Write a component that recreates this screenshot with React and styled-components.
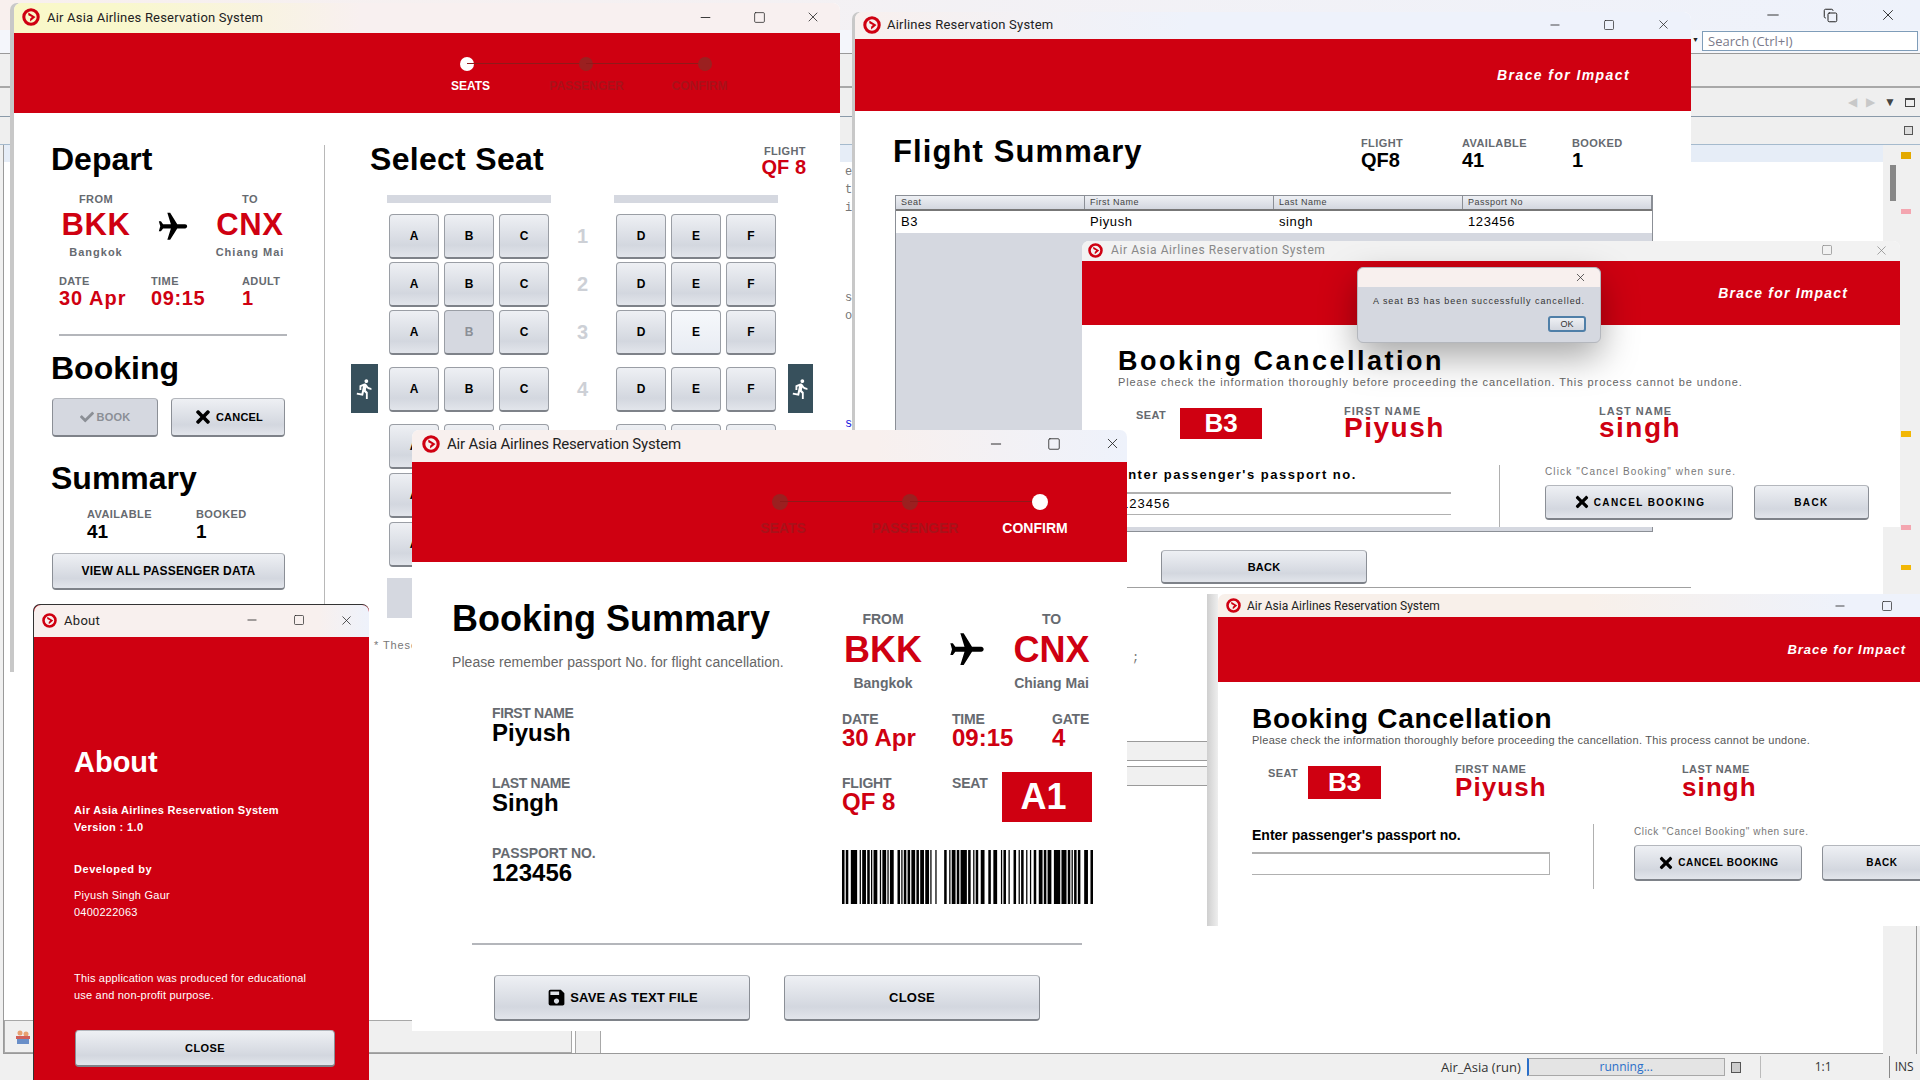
import styled, { createGlobalStyle, css } from "styled-components";
import { Minus, Square, X, Copy } from "lucide-react";
import { MdFlight, MdDirectionsRun, MdSave } from "react-icons/md";
import { FaCheck, FaTimes } from "react-icons/fa";

const RED = "#cf0011";
const GREY_TXT = "#666a70";
const PALE = "#d5d8e0";

const GlobalStyle = createGlobalStyle`
  html, body { margin: 0; padding: 0; background: #f0f0f0; }
  body { font-family: "Liberation Sans", Arial, sans-serif; }
  * { box-sizing: border-box; }
`;

const Desktop = styled.div`
  position: relative;
  width: 1920px;
  height: 1080px;
  overflow: hidden;
`;

/* ---------- the IDE behind the windows ---------- */
const Ide = styled.div`
  display: flex;
  flex-direction: column;
  height: 1080px;
  background: #f0f0f0;
`;
const IdeTitle = styled.div`
  height: 30px;
  display: flex;
  justify-content: flex-end;
  align-items: center;
  gap: 41px;
  padding-right: 23px;
  background: linear-gradient(90deg, #f8f0ee, #eef2fb);
  color: #222;
`;
const IdeSearchRow = styled.div`
  height: 24px;
  display: flex;
  justify-content: flex-end;
  align-items: flex-start;
  padding: 1px 2px 0 0;
  background: #f4f6fb;
  border-bottom: 1px solid #999;
`;
const SearchArrow = styled.span`
  margin: 5px 3px 0 0;
  color: #222;
  font-size: 7px;
`;
const SearchBox = styled.div`
  width: 216px;
  height: 20px;
  padding-left: 5px;
  background: #fff;
  border: 1px solid #7f9db9;
  color: #7a7a8a;
  font: 13px/18px "Open Sans", sans-serif;
`;
const IdeTools = styled.div`
  height: 34px;
  background: #efefef;
  border-bottom: 2px solid #a8a8a8;
`;
const IdeTabs = styled.div`
  height: 28px;
  display: flex;
  justify-content: flex-end;
  align-items: center;
  gap: 9px;
  padding-right: 5px;
  background: #efefef;
  color: #c8c8c8;
  font-size: 12px;
`;
const TabGlyph = styled.span`
  color: ${(p) => p.$c || "#c8c8c8"};
  line-height: 1;
`;
const MaxBox = styled.span`
  width: 10px;
  height: 9px;
  border: 1px solid #444;
  border-top-width: 2px;
`;
const IdeCrumbs = styled.div`
  height: 29px;
  display: flex;
  justify-content: flex-end;
  align-items: center;
  padding-right: 7px;
  background: #efefef;
  border-top: 1px solid #8a9aa9;
  border-bottom: 1px solid #a5bacd;
`;
const CrumbIcon = styled.span`
  width: 9px;
  height: 9px;
  border: 1px solid #555;
  background: #ddd;
`;
const IdeBody = styled.div`
  flex: 1;
  display: flex;
  min-height: 0;
`;
const IdeMain = styled.div`
  flex: 1;
  margin-left: 3px;
  display: flex;
  flex-direction: column;
  background: #fff;
  border-left: 1px solid #9a9a9a;
`;
const HighlightLine = styled.div`
  height: 17px;
  background: #e6edf7;
`;
const CodeArea = styled.div`
  flex: 1;
  padding: 1px 0 0 836px;
`;
const CodeLine = styled.div`
  height: 18px;
  padding-left: ${(p) => p.$pad || 5}px;
  color: ${(p) => p.$c || "#777"};
  font: 12px/18px "Liberation Mono", monospace;
`;
const StubBar = styled.div`
  height: 20px;
  width: 300px;
  margin: ${(p) => p.$top}px 0 0 ${(p) => p.$left}px;
  background: #f0f0f0;
  border: solid #9a9a9a;
  border-width: 1px 0;
`;
const BottomTabs = styled.div`
  height: 34px;
  display: flex;
  border-bottom: 1px solid #9a9a9a;
`;
const BottomStrip = styled.div`
  width: 568px;
  display: flex;
  align-items: center;
  padding-left: 9px;
  background: #f0f0f0;
  border: 1px solid #a8a8a8;
`;
const BottomTab = styled.div`
  width: 26px;
  margin-left: 3px;
  border: solid #a8a8a8;
  border-width: 1px 1px 0;
  background: #f0f0f0;
`;
const Gutter = styled.div`
  width: 37px;
  display: flex;
  flex-direction: column;
  align-items: flex-end;
`;
const GutterTop = styled.div`
  position: relative;
  width: 37px;
  height: 449px;
  background: #f0f0f0;
`;
const GutterLow = styled.div`
  flex: 1;
  width: 24px;
  background: #f0f0f0;
  border-right: 1px solid #9a9a9a;
  margin-right: 3px;
  position: relative;
`;
const Mark = styled.span`
  position: absolute;
  top: ${(p) => p.$top}px;
  right: 9px;
  width: 10px;
  height: ${(p) => p.$h || 5}px;
  background: ${(p) => p.$c};
`;
const Thumb = styled.span`
  position: absolute;
  top: 20px;
  left: 7px;
  width: 6px;
  height: 36px;
  background: #888;
`;
const IdeStatus = styled.div`
  height: 26px;
  display: flex;
  align-items: center;
  padding-left: 1441px;
  background: #f0f0f0;
  color: #333;
  font: 13px "Open Sans", sans-serif;
`;
const Progress = styled.div`
  width: 198px;
  height: 18px;
  margin-left: 6px;
  text-align: center;
  color: #2a6fc9;
  background: #e4e4e4;
  border: 1px solid #a8a8a8;
  border-left: 2px solid #2a6fc9;
  font-size: 12px;
  line-height: 15px;
`;
const StatusIcon = styled.span`
  width: 10px;
  height: 11px;
  margin: 0 19px 0 6px;
  border: 1px solid #555;
  background: #ccc;
`;
const StatusCell = styled.span`
  border-left: 1px solid ${(p) => p.$line || "#bbb"};
  height: 22px;
  line-height: 22px;
  width: ${(p) => p.$w}px;
  padding-left: ${(p) => p.$pad}px;
  font-size: 12px;
`;

/* ---------- windows on the desktop ---------- */
const Win = styled.div`
  position: absolute;
  left: ${(p) => p.$x}px;
  top: ${(p) => p.$y}px;
  width: ${(p) => p.$w}px;
  height: ${(p) => p.$h}px;
  z-index: ${(p) => p.$z};
  display: flex;
  flex-direction: column;
  background: ${(p) => p.$bg || "#fff"};
  border-radius: 7px 7px 0 0;
  box-shadow: ${(p) => p.$shadow || "none"};
  ${(p) => p.$edge && css`border-top: 1px solid #333; border-left: 1px solid #333;`}
  ${(p) =>
    p.$strip &&
    css`
      &::before {
        content: "";
        position: absolute;
        left: -11px;
        top: 0;
        bottom: 0;
        width: 11px;
        background: linear-gradient(90deg, #cfcfcf, #eeeeee);
      }
    `}
`;
const TitleBar = styled.div`
  flex: none;
  height: ${(p) => p.$h}px;
  display: flex;
  align-items: center;
  padding-left: ${(p) => p.$pad || 8}px;
  padding-bottom: ${(p) => p.$lift || 0}px;
  border-radius: 7px 7px 0 0;
  background: ${(p) => p.$bg || "linear-gradient(90deg, #f8f0ee 60%, #eef2fb)"};
`;
const LogoMark = styled.svg`
  width: ${(p) => p.$s}px;
  height: ${(p) => p.$s}px;
  flex: none;
`;
const TitleText = styled.span`
  margin-left: ${(p) => p.$gap || 7}px;
  color: ${(p) => p.$c || "#222"};
  font-family: "Roboto", sans-serif;
  font-size: ${(p) => p.$size}px;
  letter-spacing: ${(p) => p.$ls || 0}px;
`;
const Controls = styled.div`
  margin-left: auto;
  display: flex;
  align-items: center;
  gap: ${(p) => p.$gap}px;
  padding-right: ${(p) => p.$pr}px;
  color: ${(p) => p.$c || "#222"};
`;
const Ctl = styled.span`
  width: 28px;
  display: flex;
  justify-content: center;
`;
const RedBand = styled.div`
  flex: none;
  height: ${(p) => p.$h}px;
  background: ${RED};
  display: flex;
  justify-content: flex-end;
  align-items: ${(p) => (p.$center ? "center" : "flex-start")};
  padding-right: ${(p) => p.$pr || 0}px;
`;
const Brace = styled.span`
  color: #fff;
  font-size: ${(p) => p.$size || 13}px;
  font-weight: bold;
  font-style: italic;
  letter-spacing: ${(p) => p.$ls}px;
`;
const Stepper = styled.div`
  display: grid;
  grid-template-columns: repeat(3, ${(p) => p.$col}px);
  margin-top: ${(p) => p.$top}px;
  margin-right: ${(p) => p.$right}px;
`;
const Step = styled.div`
  position: relative;
  display: flex;
  flex-direction: column;
  align-items: center;
  gap: ${(p) => p.$gap}px;
  &::after {
    content: "";
    display: ${(p) => (p.$last ? "none" : "block")};
    position: absolute;
    left: 50%;
    width: 100%;
    top: ${(p) => p.$dot / 2 - 1}px;
    height: 1px;
    background: #8e1a1a;
  }
`;
const Dot = styled.span`
  width: ${(p) => p.$dot}px;
  height: ${(p) => p.$dot}px;
  border-radius: 50%;
  background: ${(p) => (p.$on ? "#fff" : "#9b2020")};
`;
const StepName = styled.span`
  font-size: ${(p) => p.$size}px;
  font-weight: bold;
  line-height: 14px;
  color: ${(p) => (p.$on ? "#fff" : "#a8121a")};
  transform: translateX(${(p) => p.$dx || 0}px);
`;

/* ---------- shared text ---------- */
const Heading = styled.h1`
  margin: ${(p) => p.$top || 0}px 0 0 ${(p) => p.$left || 0}px;
  font-size: ${(p) => p.$size}px;
  line-height: ${(p) => p.$lh}px;
  font-weight: bold;
  color: #000;
  letter-spacing: ${(p) => p.$ls || 0}px;
  white-space: nowrap;
`;
const Label = styled.div`
  font-size: ${(p) => p.$size || 11}px;
  line-height: ${(p) => p.$lh || 12}px;
  margin-top: ${(p) => p.$top || 0}px;
  font-weight: bold;
  color: ${GREY_TXT};
  letter-spacing: ${(p) => p.$ls ?? 0.4}px;
  text-align: ${(p) => p.$align || "left"};
  white-space: nowrap;
`;
const Value = styled.div`
  font-size: ${(p) => p.$size}px;
  line-height: ${(p) => p.$lh}px;
  margin-top: ${(p) => p.$top || 0}px;
  font-weight: bold;
  color: ${(p) => (p.$red ? RED : "#000")};
  letter-spacing: ${(p) => p.$ls || 0}px;
  text-align: ${(p) => p.$align || "left"};
  white-space: nowrap;
`;
const Note = styled.div`
  margin-top: ${(p) => p.$top || 0}px;
  font-size: ${(p) => p.$size}px;
  line-height: ${(p) => p.$lh}px;
  color: ${(p) => p.$c || "#666"};
  letter-spacing: ${(p) => p.$ls || 0}px;
  white-space: nowrap;
`;
const CenterCell = styled.div`
  display: flex;
  justify-content: center;
  align-items: center;
  margin-top: ${(p) => p.$top || 0}px;
`;
const Btn = styled.div`
  width: ${(p) => p.$w}px;
  height: ${(p) => p.$h}px;
  margin-top: ${(p) => p.$top || 0}px;
  margin-left: ${(p) => p.$left || 0}px;
  flex: none;
  display: flex;
  align-items: center;
  justify-content: center;
  gap: 3px;
  border: 1px solid #8b8f96;
  border-top-color: #b4b7bd;
  border-bottom: 2px solid #7e8289;
  border-radius: 4px;
  background: ${(p) => (p.$off ? "#d5d8e0" : "linear-gradient(#eef0f4, #d3d7df 72%, #e2e5eb)")};
  color: ${(p) => (p.$off ? "#8b8f96" : "#000")};
  font-size: ${(p) => p.$size || 11}px;
  font-weight: bold;
  letter-spacing: ${(p) => p.$ls || 0.2}px;
  white-space: nowrap;
`;
const BtnRow = styled.div`
  display: flex;
  gap: ${(p) => p.$gap}px;
  margin: ${(p) => p.$top || 0}px 0 0 ${(p) => p.$left || 0}px;
`;
const Tag = styled.div`
  width: ${(p) => p.$w}px;
  height: ${(p) => p.$h}px;
  padding-right: ${(p) => p.$pr || 0}px;
  display: flex;
  align-items: center;
  justify-content: center;
  background: ${RED};
  color: #fff;
  font-size: ${(p) => p.$size}px;
  font-weight: bold;
`;

/* ---------- seat window ---------- */
const SeatBody = styled.div`
  flex: 1;
  display: flex;
  min-height: 0;
  padding-top: 32px;
`;
const DepartCol = styled.div`
  width: 311px;
  padding-left: 37px;
  border-right: 1px solid #b8b8b8;
`;
const RouteRow = styled.div`
  display: grid;
  grid-template-columns: 74px 80px 74px;
  margin: ${(p) => p.$top}px 0 0 8px;
`;
const TripRow = styled.div`
  display: grid;
  grid-template-columns: 92px 91px auto;
  margin: 17px 0 0 8px;
`;
const SideRule = styled.div`
  width: 228px;
  height: 2px;
  margin: 26px 0 0 8px;
  background: #b4b6bb;
`;
const CountRow = styled.div`
  display: grid;
  grid-template-columns: 109px auto;
  margin: 16px 0 0 36px;
`;
const SeatCol = styled.div`
  width: 490px;
  padding-left: 26px;
`;
const SeatHead = styled.div`
  display: flex;
  justify-content: space-between;
  width: 455px;
`;
const SeatRow = styled.div`
  display: grid;
  grid-template-columns: 27px 11px 160px 67px 160px 12px 25px;
  height: ${(p) => p.$h || 45}px;
  margin-top: ${(p) => p.$top}px;
`;
const SeatGroup = styled.div`
  grid-column: ${(p) => p.$col};
  display: grid;
  grid-template-columns: repeat(3, 50px);
  gap: 5px;
`;
const Seat = styled.div`
  height: 45px;
  display: flex;
  align-items: center;
  justify-content: center;
  border: 1px solid #9a9ea5;
  border-bottom: 2px solid #7e8289;
  border-radius: 4px;
  background: ${(p) =>
    p.$state === "off"
      ? PALE
      : p.$state === "hover"
        ? "linear-gradient(#f6f8fb, #e8ecf3)"
        : "linear-gradient(#eef0f4, #d3d7df 72%, #e2e5eb)"};
  color: ${(p) => (p.$state === "off" ? "#8b8f96" : "#000")};
  font-size: 12px;
  font-weight: bold;
`;
const RowNumber = styled.div`
  grid-column: 4;
  display: flex;
  align-items: center;
  justify-content: center;
  color: #cdd0d6;
  font-size: 20px;
  font-weight: bold;
`;
const ExitSign = styled.div`
  grid-column: ${(p) => p.$col};
  margin: -3px 0 -1px;
  display: flex;
  align-items: center;
  justify-content: center;
  background: #37505c;
  color: #fff;
`;
const AisleBars = styled.div`
  display: grid;
  grid-template-columns: 164px 63px 164px;
  margin: ${(p) => p.$top}px 0 0 36px;
`;
const AisleBar = styled.span`
  height: ${(p) => p.$h}px;
  background: ${PALE};
`;
const TinyNote = styled.div`
  margin: 21px 0 0 23px;
  color: #777;
  font-size: 11px;
  line-height: 12px;
  letter-spacing: 0.9px;
`;

/* ---------- flight summary window ---------- */
const SummaryHead = styled.div`
  display: flex;
  padding: 23px 0 0 38px;
`;
const SummaryTitleBox = styled.div`
  width: 468px;
`;
const StatGrid = styled.div`
  display: grid;
  grid-template-columns: 101px 110px auto;
  margin-top: 3px;
`;
const DataTable = styled.div`
  width: 758px;
  height: 337px;
  margin: 25px 0 0 40px;
  background: ${PALE};
  border: 1px solid #8b8f96;
`;
const TableRow = styled.div`
  display: grid;
  grid-template-columns: repeat(4, 189px);
  height: ${(p) => p.$h}px;
  background: ${(p) => p.$bg};
  border-bottom: ${(p) => (p.$head ? "2px solid #777" : "none")};
`;
const TableCell = styled.div`
  padding-left: 5px;
  color: ${(p) => (p.$head ? "#444" : "#000")};
  font-size: ${(p) => (p.$head ? 9 : 13)}px;
  line-height: ${(p) => p.$lh}px;
  letter-spacing: ${(p) => (p.$head ? 0.5 : 0.6)}px;
  border-right: ${(p) => (p.$head ? "1px solid #8b8f96" : "none")};
`;
const WinFoot = styled.div`
  flex: 1;
  padding: 18px 0 0 306px;
  border-bottom: 1px solid #a0a0a0;
`;

/* ---------- booking cancellation windows ---------- */
const CancelBody = styled.div`
  flex: 1;
  padding: ${(p) => p.$top}px 0 0 ${(p) => p.$left}px;
  border-radius: 0 0 0 7px;
`;
const PersonRow = styled.div`
  display: grid;
  grid-template-columns: ${(p) => p.$cols};
  margin-left: ${(p) => p.$left}px;
  margin-top: 19px;
  height: ${(p) => p.$h}px;
`;
const SeatCaption = styled(Label)`
  padding-top: 1px;
  margin-top: 0;
`;
const PersonCell = styled.div`
  margin-top: -3px;
  grid-column: ${(p) => p.$col};
`;
const ConfirmRow = styled.div`
  display: flex;
  margin-top: ${(p) => p.$top}px;
`;
const PassportCol = styled.div`
  width: ${(p) => p.$w}px;
  padding-top: ${(p) => p.$top}px;
  border-right: 1px solid #b0b0b0;
  height: ${(p) => p.$h}px;
`;
const PassportInput = styled.div`
  width: ${(p) => p.$w}px;
  height: 23px;
  margin-top: 9px;
  padding-left: ${(p) => p.$pad}px;
  border: solid #b0b0b0;
  border-width: 2px ${(p) => (p.$box ? 1 : 0)}px 1px 0;
  color: #000;
  font-size: 13px;
  line-height: 20px;
  letter-spacing: 1px;
`;
const ActionCol = styled.div`
  padding-left: ${(p) => p.$left}px;
  padding-top: ${(p) => p.$top}px;
`;

/* ---------- message box on top of a window ---------- */
const MessageBox = styled.div`
  position: absolute;
  left: 275px;
  top: 26px;
  width: 244px;
  height: 76px;
  display: flex;
  flex-direction: column;
  background: ${PALE};
  border: 1px solid #b4b7bd;
  border-radius: 6px;
  box-shadow: 0 14px 36px rgba(0, 0, 0, 0.35);
`;
const MessageTitle = styled.div`
  height: 19px;
  display: flex;
  justify-content: flex-end;
  align-items: center;
  padding-right: 13px;
  background: #f8f0ee;
  border-radius: 6px 6px 0 0;
  color: #222;
`;
const MessageText = styled.div`
  margin-top: 9px;
  text-align: center;
  color: #333;
  font-size: 9px;
  letter-spacing: 0.95px;
  line-height: 11px;
  white-space: nowrap;
`;
const OkButton = styled.div`
  align-self: flex-end;
  width: 38px;
  height: 16px;
  margin: 9px 14px 0 0;
  text-align: center;
  border: 2px solid #4f7fa8;
  border-radius: 3px;
  background: linear-gradient(#eef0f4, #d3d7df);
  color: #333;
  font-size: 9px;
  line-height: 12px;
`;

/* ---------- booking summary window ---------- */
const TicketMain = styled.div`
  display: flex;
  height: 381px;
  padding-left: 40px;
`;
const TicketLeft = styled.div`
  width: 390px;
  padding-top: 37px;
`;
const PassengerField = styled.div`
  margin: ${(p) => p.$top}px 0 0 40px;
`;
const TicketRight = styled.div`
  width: 252px;
  padding-top: 49px;
`;
const TicketRoute = styled.div`
  display: grid;
  grid-template-columns: 82px 85px 85px;
`;
const TicketDates = styled.div`
  display: grid;
  grid-template-columns: 110px 100px 42px;
  margin-top: 21px;
`;
const TicketSeat = styled.div`
  display: grid;
  grid-template-columns: 110px 50px 90px;
  margin-top: 22px;
`;
const CellPad = styled.div`
  padding-top: 4px;
`;
const TicketRule = styled.div`
  width: 610px;
  height: 2px;
  margin-left: 60px;
  background: #b4b6bb;
`;
const BarcodeSvg = styled.svg`
  display: block;
  width: 251px;
  height: 54px;
  margin-top: 28px;
`;

/* ---------- about window ---------- */
const AboutBody = styled.div`
  flex: 1;
  padding: 109px 0 0 40px;
  background: ${RED};
  color: #fff;
`;
const AboutTitle = styled.div`
  font-size: 29px;
  line-height: 32px;
  font-weight: bold;
`;
const AboutText = styled.div`
  margin-top: ${(p) => p.$top}px;
  font-size: 11px;
  line-height: 17px;
  font-weight: ${(p) => (p.$bold ? "bold" : "normal")};
  letter-spacing: ${(p) => p.$ls}px;
`;

function Logo({ size }) {
  return (
    <LogoMark $s={size} viewBox="0 0 20 20">
      <circle cx="10" cy="10" r="8" fill="none" stroke={RED} strokeWidth="3.4" />
      <path d="M7 5 L15 10 L9 15 L9 12 L11 10 L7 8 Z" fill={RED} />
    </LogoMark>
  );
}

function WinControls({ gap, pr, size = 15, color, noMin, noClose }) {
  return (
    <Controls $gap={gap} $pr={pr} $c={color}>
      {!noMin && (
        <Ctl>
          <Minus size={size} strokeWidth={1.4} />
        </Ctl>
      )}
      <Ctl>
        <Square size={size - 2} strokeWidth={1.4} />
      </Ctl>
      {!noClose && (
        <Ctl>
          <X size={size + 1} strokeWidth={1.2} />
        </Ctl>
      )}
    </Controls>
  );
}

function Steps({ active, col, top, right, dot, size, gap, shift }) {
  const names = ["SEATS", "PASSENGER", "CONFIRM"];
  return (
    <Stepper $col={col} $top={top} $right={right}>
      {names.map((name, i) => (
        <Step key={name} $gap={gap} $dot={dot} $last={i === 2}>
          <Dot $dot={dot} $on={i === active} />
          <StepName $size={size} $on={i === active} $dx={shift[i]}>
            {name}
          </StepName>
        </Step>
      ))}
    </Stepper>
  );
}

// rows 5 to 7 sit behind the booking summary window, only the A column peeks out
const SEAT_ROWS = [
  { n: 1, top: 11 },
  { n: 2, top: 3 },
  { n: 3, top: 3, off: "B", hover: "E" },
  { n: 4, top: 12, exit: true },
  { n: 5, top: 12, covered: true },
  { n: 6, top: 4, covered: true },
  { n: 7, top: 4, covered: true },
];

function seatState(row, letter) {
  if (row.off === letter) return "off";
  if (row.hover === letter) return "hover";
  return "on";
}

function SeatMap() {
  return (
    <>
      {SEAT_ROWS.map((row) => (
        <SeatRow key={row.n} $top={row.top}>
          {row.exit && (
            <ExitSign $col={1}>
              <MdDirectionsRun size={22} />
            </ExitSign>
          )}
          <SeatGroup $col={3}>
            {["A", "B", "C"].map((l) => (
              <Seat key={l} $state={seatState(row, l)}>
                {row.covered && l !== "A" ? "" : l}
              </Seat>
            ))}
          </SeatGroup>
          <RowNumber>{row.covered ? "" : row.n}</RowNumber>
          <SeatGroup $col={5}>
            {["D", "E", "F"].map((l) => (
              <Seat key={l} $state={seatState(row, l)}>
                {row.covered ? "" : l}
              </Seat>
            ))}
          </SeatGroup>
          {row.exit && (
            <ExitSign $col={7}>
              <MdDirectionsRun size={22} />
            </ExitSign>
          )}
        </SeatRow>
      ))}
    </>
  );
}

const BARS = [
  2, 1, 2, 2, 5, 2, 1, 1, 3, 1, 2, 1, 1, 1, 3, 2, 1, 1, 3, 1, 1, 1, 3, 3, 2, 1, 1, 1, 2, 1, 2, 1, 3, 1, 2, 1, 3, 1, 3, 1, 1,
  3, 1, 6, 2, 2, 1, 1, 3, 1, 2, 1, 5, 1, 2, 2, 1, 1, 2, 2, 3, 3, 2, 2, 3, 3, 1, 1, 2, 2, 1, 3, 2, 2, 1, 1, 2, 2, 1, 2, 1, 2,
  2, 2, 3, 1, 2, 1, 3, 2, 5, 1, 4, 1, 2, 1, 1, 1, 2, 1, 2, 3, 3, 2, 2,
];

function Barcode() {
  let x = 0;
  const rects = BARS.map((w, i) => {
    const r = i % 2 === 0 ? <rect key={i} x={x} y="0" width={w} height="54" fill="#000" /> : null;
    x += w;
    return r;
  });
  return (
    <BarcodeSvg viewBox={`0 0 ${x} 54`} preserveAspectRatio="none">
      {rects}
    </BarcodeSvg>
  );
}

const Plane = styled(MdFlight)`
  transform: rotate(90deg);
`;

const CODE_LINES = [
  "e", "te", " i", "", "", "", "", "st", "or", "", "", "", "", "", "s",
  "", "", "", "", "", "", "", "", "", "", "", "",
];

function IdeBackground() {
  return (
    <Ide>
      <IdeTitle>
        <Minus size={18} strokeWidth={1.2} />
        <Copy size={15} strokeWidth={1.6} />
        <X size={18} strokeWidth={1.2} />
      </IdeTitle>
      <IdeSearchRow>
        <SearchArrow>▼</SearchArrow>
        <SearchBox>Search (Ctrl+I)</SearchBox>
      </IdeSearchRow>
      <IdeTools />
      <IdeTabs>
        <TabGlyph>◀</TabGlyph>
        <TabGlyph>▶</TabGlyph>
        <TabGlyph $c="#444">▼</TabGlyph>
        <MaxBox />
      </IdeTabs>
      <IdeCrumbs>
        <CrumbIcon />
      </IdeCrumbs>
      <IdeBody>
        <IdeMain>
          <HighlightLine />
          <CodeArea>
            {CODE_LINES.map((t, i) => (
              <CodeLine key={i} $c={t === "s" ? "#1a1ae0" : undefined}>
                {t || "\u00a0"}
              </CodeLine>
            ))}
            <CodeLine $pad={292}>;</CodeLine>
            <StubBar $top={74} $left={70} />
            <StubBar $top={5} $left={70} />
          </CodeArea>
          <BottomTabs>
            <BottomStrip>
              <svg width="18" height="16" viewBox="0 0 18 16">
                <circle cx="6" cy="4" r="2.5" fill="#e8a070" />
                <circle cx="12" cy="5" r="2.5" fill="#e8a070" />
                <rect x="2" y="7" width="14" height="3" fill="#d0605a" />
                <rect x="3" y="10" width="12" height="5" fill="#6a8fc8" />
              </svg>
            </BottomStrip>
            <BottomTab />
          </BottomTabs>
        </IdeMain>
        <Gutter>
          <GutterTop>
            <Thumb />
            <Mark $top={7} $c="#e3a900" $h={7} />
            <Mark $top={64} $c="#f4a6b0" />
            <Mark $top={286} $c="#f2b705" $h={6} />
            <Mark $top={380} $c="#f4a6b0" />
            <Mark $top={420} $c="#f2b705" />
          </GutterTop>
          <GutterLow />
        </Gutter>
      </IdeBody>
      <IdeStatus>
        Air_Asia (run)
        <Progress>running...</Progress>
        <StatusIcon />
        <StatusCell $w={129} $pad={54}>
          1:1
        </StatusCell>
        <StatusCell $w={30} $pad={5} $line="#888">
          INS
        </StatusCell>
      </IdeStatus>
    </Ide>
  );
}

function SeatWindow() {
  return (
    <Win $x={14} $y={3} $w={826} $h={669} $z={1} $shadow="-4px 0 0 #c8c8c8">
      <TitleBar $h={30} $pad={8} $lift={2} $bg="linear-gradient(90deg, #f9f8c8, #f9f8cc 12%, #f8f0f0 42%)">
        <Logo size={18} />
        <TitleText $size={13} $ls={0.2}>
          Air Asia Airlines Reservation System
        </TitleText>
        <WinControls gap={26} pr={13} />
      </TitleBar>
      <RedBand $h={80}>
        <Steps active={0} col={119} top={24} right={76} dot={14} size={12} gap={8} shift={[4, 1, -5]} />
      </RedBand>
      <SeatBody>
        <DepartCol>
          <Heading $size={32} $lh={28}>
            Depart
          </Heading>
          <RouteRow $top={20}>
            <Label $align="center">FROM</Label>
            <span />
            <Label $align="center">TO</Label>
            <Value $red $size={31} $lh={30} $ls={0.6} $align="center" $top={5}>
              BKK
            </Value>
            <CenterCell $top={5}>
              <Plane size={34} />
            </CenterCell>
            <Value $red $size={31} $lh={30} $ls={0.6} $align="center" $top={5}>
              CNX
            </Value>
            <Label $ls={1} $align="center" $top={2}>
              Bangkok
            </Label>
            <span />
            <Label $ls={1} $align="center" $top={2}>
              Chiang Mai
            </Label>
          </RouteRow>
          <TripRow>
            <Label>DATE</Label>
            <Label>TIME</Label>
            <Label>ADULT</Label>
            <Value $red $size={20} $lh={20} $ls={1} $top={1}>
              30 Apr
            </Value>
            <Value $red $size={20} $lh={20} $ls={0.6} $top={1}>
              09:15
            </Value>
            <Value $red $size={20} $lh={20} $top={1}>
              1
            </Value>
          </TripRow>
          <SideRule />
          <Heading $size={32} $lh={28} $top={18}>
            Booking
          </Heading>
          <BtnRow $gap={13} $top={16} $left={1}>
            <Btn $w={106} $h={39} $off>
              <FaCheck size={14} />
              BOOK
            </Btn>
            <Btn $w={114} $h={39}>
              <FaTimes size={20} />
              CANCEL
            </Btn>
          </BtnRow>
          <Heading $size={32} $lh={28} $top={27}>
            Summary
          </Heading>
          <CountRow>
            <Label>AVAILABLE</Label>
            <Label>BOOKED</Label>
            <Value $size={19} $lh={20} $top={2}>
              41
            </Value>
            <Value $size={19} $lh={20} $top={2}>
              1
            </Value>
          </CountRow>
          <Btn $w={233} $h={37} $top={11} $left={1} $size={12}>
            VIEW ALL PASSENGER DATA
          </Btn>
        </DepartCol>
        <SeatCol>
          <SeatHead>
            <Heading $size={32} $lh={28} $left={19} $ls={0.3}>
              Select Seat
            </Heading>
            <div>
              <Label $align="right">FLIGHT</Label>
              <Value $red $size={20} $lh={20} $align="right">
                QF 8
              </Value>
            </div>
          </SeatHead>
          <AisleBars $top={18}>
            <AisleBar $h={8} />
            <span />
            <AisleBar $h={8} />
          </AisleBars>
          <SeatMap />
          <AisleBars $top={11}>
            <AisleBar $h={40} />
          </AisleBars>
          <TinyNote>* These</TinyNote>
        </SeatCol>
      </SeatBody>
    </Win>
  );
}

function SummaryWindow() {
  return (
    <Win $x={855} $y={12} $w={836} $h={576} $z={1} $shadow="-3px 0 0 #c8c8c8">
      <TitleBar $h={27} $pad={8} $lift={2} $bg="linear-gradient(90deg, #f8f0ee, #eef2fb 40%)">
        <Logo size={18} />
        <TitleText $size={13} $ls={0.2} $gap={6}>
          Airlines Reservation System
        </TitleText>
        <WinControls gap={26} pr={14} size={14} />
      </TitleBar>
      <RedBand $h={72} $center $pr={61}>
        <Brace $size={14} $ls={1.4}>
          Brace for Impact
        </Brace>
      </RedBand>
      <SummaryHead>
        <SummaryTitleBox>
          <Heading $size={31} $lh={36} $ls={1.1}>
            Flight Summary
          </Heading>
        </SummaryTitleBox>
        <StatGrid>
          <Label>FLIGHT</Label>
          <Label>AVAILABLE</Label>
          <Label>BOOKED</Label>
          <Value $size={20} $lh={20}>
            QF8
          </Value>
          <Value $size={20} $lh={20}>
            41
          </Value>
          <Value $size={20} $lh={20}>
            1
          </Value>
        </StatGrid>
      </SummaryHead>
      <DataTable>
        <TableRow $h={15} $bg="linear-gradient(#eef0f4, #d3d7df)" $head>
          {["Seat", "First Name", "Last Name", "Passport No"].map((t) => (
            <TableCell key={t} $head $lh={13}>
              {t}
            </TableCell>
          ))}
        </TableRow>
        <TableRow $h={22} $bg="#fff">
          {["B3", "Piyush", "singh", "123456"].map((t) => (
            <TableCell key={t} $lh={22}>
              {t}
            </TableCell>
          ))}
        </TableRow>
      </DataTable>
      <WinFoot>
        <Btn $w={206} $h={34}>
          BACK
        </Btn>
      </WinFoot>
    </Win>
  );
}

function CancelledWindow() {
  return (
    <Win $x={1082} $y={241} $w={818} $h={286} $z={2}>
      <TitleBar $h={20} $pad={6} $lift={2} $bg="#f2f2f2">
        <Logo size={15} />
        <TitleText $size={12} $ls={0.6} $c="#888" $gap={8}>
          Air Asia Airlines Reservation System
        </TitleText>
        <WinControls gap={26} pr={5} size={14} color="#888" noMin />
      </TitleBar>
      <RedBand $h={64} $center $pr={52}>
        <Brace $size={14} $ls={1.2}>
          Brace for Impact
        </Brace>
      </RedBand>
      <CancelBody $top={20} $left={36}>
        <Heading $size={27} $lh={32} $ls={2.5}>
          Booking Cancellation
        </Heading>
        <Note $size={11} $lh={14} $ls={0.9} $top={-2}>
          Please check the information thoroughly before proceeding the cancellation. This process cannot be undone.
        </Note>
        <PersonRow $cols="44px 82px 82px 255px auto" $left={18} $h={31}>
          <SeatCaption>SEAT</SeatCaption>
          <Tag $w={82} $h={31} $size={26}>
            B3
          </Tag>
          <PersonCell $col={4}>
            <Label $ls={1}>FIRST NAME</Label>
            <Value $red $size={28} $lh={22} $ls={1.5}>
              Piyush
            </Value>
          </PersonCell>
          <PersonCell $col={5}>
            <Label $ls={1}>LAST NAME</Label>
            <Value $red $size={28} $lh={22} $ls={1.5}>
              singh
            </Value>
          </PersonCell>
        </PersonRow>
        <ConfirmRow $top={26}>
          <PassportCol $w={382} $top={2} $h={62}>
            <Value $size={13} $lh={16} $ls={1.5}>
              Enter passenger's passport no.
            </Value>
            <PassportInput $w={333} $pad={3}>
              123456
            </PassportInput>
          </PassportCol>
          <ActionCol $left={45} $top={1}>
            <Note $size={10} $lh={12} $ls={1.15} $c="#777">
              Click "Cancel Booking" when sure.
            </Note>
            <BtnRow $gap={21} $top={7}>
              <Btn $w={188} $h={35} $size={10} $ls={1.4}>
                <FaTimes size={18} />
                CANCEL BOOKING
              </Btn>
              <Btn $w={115} $h={35} $size={10} $ls={1.4}>
                BACK
              </Btn>
            </BtnRow>
          </ActionCol>
        </ConfirmRow>
      </CancelBody>
      <MessageBox>
        <MessageTitle>
          <X size={13} strokeWidth={1.3} />
        </MessageTitle>
        <MessageText>A seat B3 has been successfully cancelled.</MessageText>
        <OkButton>OK</OkButton>
      </MessageBox>
    </Win>
  );
}

function TicketWindow() {
  return (
    <Win $x={412} $y={430} $w={715} $h={601} $z={3}>
      <TitleBar $h={32} $pad={10} $lift={5} $bg="linear-gradient(90deg, #f8f0ee 65%, #eef2fb)">
        <Logo size={18} />
        <TitleText $size={15} $ls={-0.2} $gap={7}>
          Air Asia Airlines Reservation System
        </TitleText>
        <WinControls gap={30} pr={1} size={16} />
      </TitleBar>
      <RedBand $h={100}>
        <Steps active={2} col={130} top={32} right={22} dot={16} size={14} gap={11} shift={[3, 5, -5]} />
      </RedBand>
      <TicketMain>
        <TicketLeft>
          <Heading $size={36} $lh={40}>
            Booking Summary
          </Heading>
          <Note $size={14} $lh={18} $top={14} $ls={0.05}>
            Please remember passport No. for flight cancellation.
          </Note>
          <PassengerField $top={34}>
            <Label $size={14} $lh={16} $ls={-0.4}>
              FIRST NAME
            </Label>
            <Value $size={24} $lh={24}>
              Piyush
            </Value>
          </PassengerField>
          <PassengerField $top={30}>
            <Label $size={14} $lh={16} $ls={-0.4}>
              LAST NAME
            </Label>
            <Value $size={24} $lh={24}>
              Singh
            </Value>
          </PassengerField>
          <PassengerField $top={30}>
            <Label $size={14} $lh={16} $ls={-0.1}>
              PASSPORT NO.
            </Label>
            <Value $size={24} $lh={24}>
              123456
            </Value>
          </PassengerField>
        </TicketLeft>
        <TicketRight>
          <TicketRoute>
            <Label $size={14} $lh={16} $ls={0} $align="center">
              FROM
            </Label>
            <span />
            <Label $size={14} $lh={16} $ls={0} $align="center">
              TO
            </Label>
            <Value $red $size={36} $lh={40} $align="center" $top={3}>
              BKK
            </Value>
            <CenterCell $top={3}>
              <Plane size={40} />
            </CenterCell>
            <Value $red $size={36} $lh={40} $align="center" $top={3}>
              CNX
            </Value>
            <Label $size={14} $lh={16} $ls={0} $align="center" $top={5}>
              Bangkok
            </Label>
            <span />
            <Label $size={14} $lh={16} $ls={0} $align="center" $top={5}>
              Chiang Mai
            </Label>
          </TicketRoute>
          <TicketDates>
            <Label $size={14} $lh={14} $ls={-0.2}>
              DATE
            </Label>
            <Label $size={14} $lh={14} $ls={-0.2}>
              TIME
            </Label>
            <Label $size={14} $lh={14} $ls={-0.2}>
              GATE
            </Label>
            <Value $red $size={24} $lh={24}>
              30 Apr
            </Value>
            <Value $red $size={24} $lh={24}>
              09:15
            </Value>
            <Value $red $size={24} $lh={24}>
              4
            </Value>
          </TicketDates>
          <TicketSeat>
            <CellPad>
              <Label $size={14} $lh={14} $ls={-0.2}>
                FLIGHT
              </Label>
              <Value $red $size={24} $lh={24}>
                QF 8
              </Value>
            </CellPad>
            <CellPad>
              <Label $size={14} $lh={14} $ls={-0.2}>
                SEAT
              </Label>
            </CellPad>
            <Tag $w={90} $h={50} $size={36} $pr={7}>
              A1
            </Tag>
          </TicketSeat>
          <Barcode />
        </TicketRight>
      </TicketMain>
      <TicketRule />
      <BtnRow $gap={34} $top={30} $left={82}>
        <Btn $w={256} $h={46} $size={13}>
          <MdSave size={21} />
          SAVE AS TEXT FILE
        </Btn>
        <Btn $w={256} $h={46} $size={13}>
          CLOSE
        </Btn>
      </BtnRow>
    </Win>
  );
}

function ConfirmWindow() {
  return (
    <Win $x={1218} $y={594} $w={739} $h={332} $z={2} $strip>
      <TitleBar $h={23} $pad={8} $bg="linear-gradient(90deg, #f8f0ea 50%, #eef2fb 85%)">
        <Logo size={15} />
        <TitleText $size={12} $ls={0} $gap={6}>
          Air Asia Airlines Reservation System
        </TitleText>
        <WinControls gap={19} pr={9} size={14} />
      </TitleBar>
      <RedBand $h={65} $center $pr={51}>
        <Brace $size={13} $ls={1}>
          Brace for Impact
        </Brace>
      </RedBand>
      <CancelBody $top={21} $left={34}>
        <Heading $size={28} $lh={32} $ls={0.7}>
          Booking Cancellation
        </Heading>
        <Note $size={11} $lh={14} $ls={0.27} $top={-2} $c="#555">
          Please check the information thoroughly before proceeding the cancellation. This process cannot be undone.
        </Note>
        <PersonRow $cols="40px 73px 74px 227px auto" $left={16} $h={33}>
          <SeatCaption>SEAT</SeatCaption>
          <Tag $w={73} $h={33} $size={26}>
            B3
          </Tag>
          <PersonCell $col={4}>
            <Label>FIRST NAME</Label>
            <Value $red $size={26} $lh={24} $ls={1.1}>
              Piyush
            </Value>
          </PersonCell>
          <PersonCell $col={5}>
            <Label>LAST NAME</Label>
            <Value $red $size={26} $lh={24} $ls={1.1}>
              singh
            </Value>
          </PersonCell>
        </PersonRow>
        <ConfirmRow $top={25}>
          <PassportCol $w={342} $top={3} $h={65}>
            <Value $size={14} $lh={16}>
              Enter passenger's passport no.
            </Value>
            <PassportInput $w={298} $pad={3} $box />
          </PassportCol>
          <ActionCol $left={40} $top={2}>
            <Note $size={10} $lh={12} $ls={0.65} $c="#777">
              Click "Cancel Booking" when sure.
            </Note>
            <BtnRow $gap={20} $top={7}>
              <Btn $w={168} $h={36} $size={10} $ls={0.6}>
                <FaTimes size={18} />
                CANCEL BOOKING
              </Btn>
              <Btn $w={120} $h={36} $size={10} $ls={0.6}>
                BACK
              </Btn>
            </BtnRow>
          </ActionCol>
        </ConfirmRow>
      </CancelBody>
    </Win>
  );
}

function AboutWindow() {
  return (
    <Win $x={33} $y={604} $w={336} $h={476} $z={3} $bg={RED} $edge>
      <TitleBar $h={32} $pad={8} $lift={2} $bg="linear-gradient(90deg, #f8f0ee 85%, #eef2fb)">
        <Logo size={15} />
        <TitleText $size={13} $ls={0.3} $gap={7}>
          About
        </TitleText>
        <WinControls gap={19} pr={9} size={14} />
      </TitleBar>
      <AboutBody>
        <AboutTitle>About</AboutTitle>
        <AboutText $top={24} $bold $ls={0.35}>
          Air Asia Airlines Reservation System
          <br />
          Version : 1.0
        </AboutText>
        <AboutText $top={25} $bold $ls={0.55}>
          Developed by
        </AboutText>
        <AboutText $top={9} $ls={0.25}>
          Piyush Singh Gaur
          <br />
          0400222063
        </AboutText>
        <AboutText $top={49} $ls={0.2}>
          This application was produced for educational
          <br />
          use and non-profit purpose.
        </AboutText>
        <Btn $w={260} $h={37} $top={26} $left={1} $size={11} $ls={0.4}>
          CLOSE
        </Btn>
      </AboutBody>
    </Win>
  );
}

export default function App() {
  return (
    <Desktop>
      <GlobalStyle />
      <IdeBackground />
      <SeatWindow />
      <SummaryWindow />
      <CancelledWindow />
      <ConfirmWindow />
      <TicketWindow />
      <AboutWindow />
    </Desktop>
  );
}
